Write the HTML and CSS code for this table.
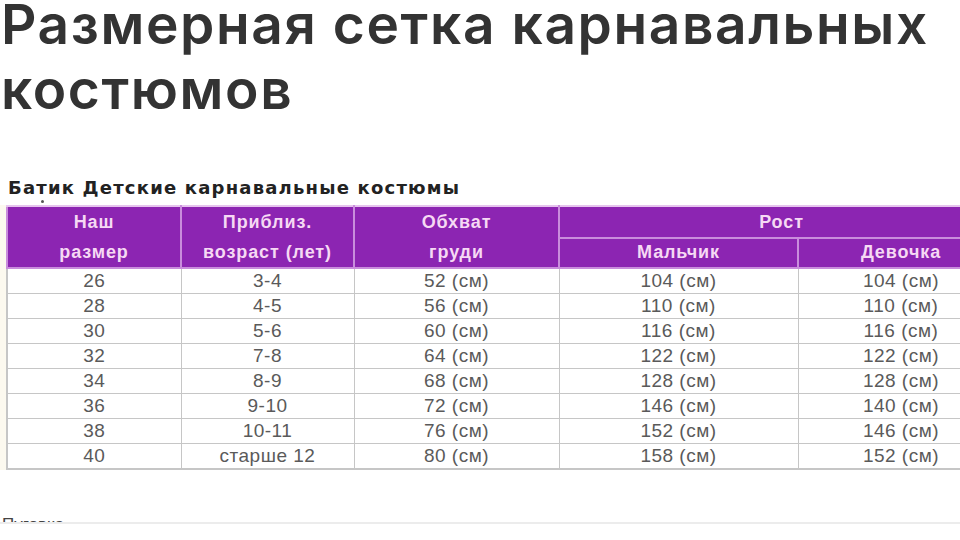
FILE: index.html
```html
<!DOCTYPE html>
<html lang="ru">
<head>
<meta charset="utf-8">
<link rel="stylesheet" href="styles.css">
</head>
<body>
<div class="page">
  <h1 class="title">Размерная сетка карнавальных костюмов</h1>
  <h2 class="subtitle">Батик Детские карнавальные костюмы</h2>
  <div class="table-wrap">
    <span class="dot"></span>
    <table class="sizes">
      <colgroup>
        <col class="c1"><col class="c2"><col class="c3"><col class="c4"><col class="c5">
      </colgroup>
      <thead>
        <tr class="h1">
          <th rowspan="2">Наш<br>размер</th>
          <th rowspan="2">Приблиз.<br>возраст (лет)</th>
          <th rowspan="2">Обхват<br>груди</th>
          <th colspan="2">Рост</th>
        </tr>
        <tr class="h2">
          <th>Мальчик</th>
          <th>Девочка</th>
        </tr>
      </thead>
      <tbody>
        <tr><td>26</td><td>3-4</td><td>52 (см)</td><td>104 (см)</td><td>104 (см)</td></tr>
        <tr><td>28</td><td>4-5</td><td>56 (см)</td><td>110 (см)</td><td>110 (см)</td></tr>
        <tr><td>30</td><td>5-6</td><td>60 (см)</td><td>116 (см)</td><td>116 (см)</td></tr>
        <tr><td>32</td><td>7-8</td><td>64 (см)</td><td>122 (см)</td><td>122 (см)</td></tr>
        <tr><td>34</td><td>8-9</td><td>68 (см)</td><td>128 (см)</td><td>128 (см)</td></tr>
        <tr><td>36</td><td>9-10</td><td>72 (см)</td><td>146 (см)</td><td>140 (см)</td></tr>
        <tr><td>38</td><td>10-11</td><td>76 (см)</td><td>152 (см)</td><td>146 (см)</td></tr>
        <tr><td>40</td><td>старше 12</td><td>80 (см)</td><td>158 (см)</td><td>152 (см)</td></tr>
      </tbody>
    </table>
  </div>
  <div class="next">
    <div class="next-text">Пуговка</div>
  </div>
</div>
</body>
</html>
```

FILE: styles.css
```css
html, body {
  margin: 0;
  padding: 0;
  background: #ffffff;
}
body {
  width: 960px;
  height: 540px;
  overflow: hidden;
  font-family: "Liberation Sans", Arial, sans-serif;
}
.page {
  width: 960px;
}
.title {
  margin: -8px 0 0 0;
  padding: 0 0 0 1px;
  font-family: Inter, "Liberation Sans", sans-serif;
  font-size: 55px;
  line-height: 65px;
  font-weight: 600;
  color: #333333;
  letter-spacing: 1.6px;
  width: 958px;
}
.subtitle {
  margin: 55px 0 0 8px;
  font-family: "DejaVu Sans", "Liberation Sans", sans-serif;
  font-size: 18px;
  line-height: 22px;
  font-weight: bold;
  color: #222222;
  letter-spacing: 1.2px;
}
.table-wrap {
  position: relative;
  margin-top: 6px;
  padding-left: 6px;
  width: 1100px;
  background: linear-gradient(to right, #fcf9ef 0, #fcf9ef 6px, transparent 6px);
}
.dot {
  position: absolute;
  left: 41px;
  top: -5px;
  width: 3px;
  height: 3px;
  border-radius: 50%;
  background: #555;
}
.sizes {
  border-collapse: collapse;
  table-layout: fixed;
  width: 997px;
  background: #ffffff;
}
.c1 { width: 174px; }
.c2 { width: 173px; }
.c3 { width: 205px; }
.c4 { width: 239px; }
.c5 { width: 206px; }
.sizes th {
  background: #8c25b2;
  color: #f6d9f4;
  font-weight: bold;
  font-size: 18px;
  letter-spacing: 0.9px;
  line-height: 30px;
  border: 2px solid #c98ddc;
  padding: 0;
  text-align: center;
  vertical-align: middle;
}
.sizes thead tr.h1 th { border-top-color: #e6c4ee; }
.sizes .h1 th[colspan] { height: 28px; line-height: 28px; }
.sizes .h2 th { height: 27px; line-height: 27px; }
.sizes td {
  border: 1px solid #c6c6c6;
  height: 24px;
  padding: 0;
  text-align: center;
  font-size: 19px;
  line-height: 24px;
  color: #5a5a5a;
  letter-spacing: 0.5px;
}
.sizes tbody tr:first-child td { border-top: 2px solid #e8e0ec; }
.sizes tbody td:first-child { border-left: 2px solid #c6c6c6; }
.sizes tbody tr:last-child td { border-bottom: 2px solid #c6c6c6; }
.next {
  margin-top: 45px;
  height: 7px;
  overflow: hidden;
  border-bottom: 2px solid #ececec;
}
.next-text {
  padding-left: 2px;
  font-size: 17px;
  line-height: 20px;
  color: #444;
}
```
